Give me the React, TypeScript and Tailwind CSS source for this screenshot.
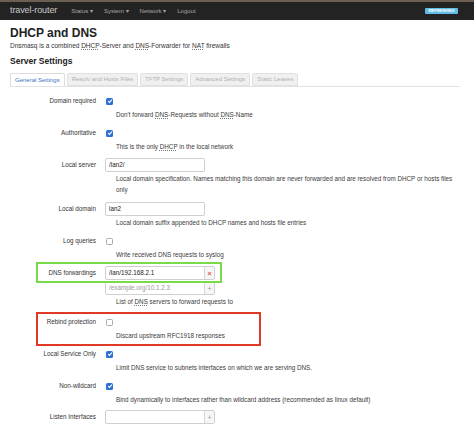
import React from 'react';

const Abbr = ({ children }: { children: React.ReactNode }) => (
  <span className="underline decoration-dotted decoration-[#777] underline-offset-[1px]">{children}</span>
);

const Check = ({ on }: { on?: boolean }) =>
  on ? (
    <span className="w-[7px] h-[7px] rounded-[1.5px] bg-[#2f6fd6] flex items-center justify-center">
      <svg viewBox="0 0 8 8" className="w-[6px] h-[6px]">
        <path d="M1.6 4.3 L3.3 5.9 L6.5 2.1" stroke="white" strokeWidth="1.5" fill="none" />
      </svg>
    </span>
  ) : (
    <span className="w-[7px] h-[7px] rounded-[1.5px] border border-[#a9a9a9] bg-white" />
  );

const TextInput = ({ value }: { value: string }) => (
  <div className="h-[14px] w-[100px] border border-[#cfcfcf] rounded-[2px] px-[3px] flex items-center text-[#222] bg-white">
    {value}
  </div>
);

const ListInput = ({ value, placeholder, btn }: { value?: string; placeholder?: string; btn: 'x' | '+' }) => (
  <div className="h-[14px] w-[110px] flex border border-[#cfcfcf] rounded-[2px] bg-white">
    <div className={`flex-1 px-[3px] flex items-center ${value ? 'text-[#222]' : 'text-[#999]'}`}>
      {value || placeholder}
    </div>
    <div className="w-[10px] border-l border-[#d6d6d6] bg-[#f6f6f6] flex items-center justify-center">
      {btn === 'x' ? (
        <span className="text-[#d9534f] text-[7px] font-bold leading-none">×</span>
      ) : (
        <span className="text-[#999] text-[7px] leading-none">+</span>
      )}
    </div>
  </div>
);

interface RowProps {
  label: string;
  children: React.ReactNode;
  desc?: React.ReactNode;
  className?: string;
}

const Row = ({ label, children, desc, className = 'mb-[6px]' }: RowProps) => (
  <div className={`flex ${className}`}>
    <div className="w-[86px] h-[14px] flex items-center justify-end text-[#333] shrink-0">{label}</div>
    <div className="ml-[9px] flex-1">
      {children}
      {desc && <div className="ml-[11px] mt-[1px] leading-[11px] text-[#3a3a3a]">{desc}</div>}
    </div>
  </div>
);

const CheckLine = ({ on }: { on?: boolean }) => (
  <div className="h-[14px] flex items-center pl-[1px]">
    <Check on={on} />
  </div>
);

export default function App() {
  const tabs = ['General Settings', 'Resolv and Hosts Files', 'TFTP Settings', 'Advanced Settings', 'Static Leases'];

  return (
    <div className="w-[474px] h-[427px] overflow-hidden bg-white font-['Liberation_Sans',Arial,sans-serif] text-[6.3px]">
      {/* Navbar */}
      <div className="h-[20px] bg-[#232323] border-t-2 border-[#6b5f52] flex items-center px-[10px]">
        <span className="text-[9px] text-[#c9c9c9] tracking-[-0.1px]">travel-router</span>
        <div className="ml-[14px] flex items-center gap-[11px] text-[6px] text-[#a8a8a8]">
          <span>Status ▾</span>
          <span>System ▾</span>
          <span>Network ▾</span>
          <span>Logout</span>
        </div>
        <span className="ml-auto mr-[6px] bg-[#62bde6] text-white text-[4px] font-bold px-[2px] h-[6px] w-[33px] flex items-center justify-center rounded-[1px]">
          REFRESHING
        </span>
      </div>

      <div className="px-[10px]">
        <h1 className="mt-[6px] text-[12px] leading-[14px] font-bold text-[#222]">DHCP and DNS</h1>
        <p className="mt-[1px] leading-[10px] text-[#333] text-[6.5px]">
          Dnsmasq is a combined <Abbr>DHCP</Abbr>-Server and <Abbr>DNS</Abbr>-Forwarder for <Abbr>NAT</Abbr> firewalls
        </p>
        <h2 className="mt-[5px] text-[8.5px] leading-[11px] font-bold text-[#222]">Server Settings</h2>

        {/* Tabs */}
        <div className="mt-[6px] flex gap-[2px] border-b border-[#e3e3e3] w-[450px] text-[6px]">
          {tabs.map((t, i) =>
            i === 0 ? (
              <div key={t} className="h-[13px] px-[4px] flex items-center border border-b-0 border-[#ddd] bg-white text-[#3b73c4] rounded-t-[2px] -mb-[1px]">
                {t}
              </div>
            ) : (
              <div key={t} className="h-[13px] px-[4px] flex items-center border border-[#e0e0e0] bg-[#f0f0f0] text-[#b0b0b0] rounded-t-[2px]">
                {t}
              </div>
            )
          )}
        </div>

        <div className="mt-[7px]">
          <Row
            label="Domain required"
            desc={<>Don't forward <Abbr>DNS</Abbr>-Requests without <Abbr>DNS</Abbr>-Name</>}
          >
            <CheckLine on />
          </Row>
          <Row label="Authoritative" desc={<>This is the only <Abbr>DHCP</Abbr> in the local network</>}>
            <CheckLine on />
          </Row>
          <Row
            label="Local server"
            className="mb-[7px]"
            desc={
              <>
                Local domain specification. Names matching this domain are never forwarded and are resolved from DHCP or hosts files
                <br />
                only
              </>
            }
          >
            <TextInput value="/lan2/" />
          </Row>
          <Row label="Local domain" desc="Local domain suffix appended to DHCP names and hosts file entries">
            <TextInput value="lan2" />
          </Row>
          <Row label="Log queries" desc="Write received DNS requests to syslog">
            <CheckLine />
          </Row>

          <div className="relative">
            <div className="absolute left-[26px] top-[-4px] w-[186px] h-[21px] border-2 border-[#78dc4a] pointer-events-none" />
            <Row
              label="DNS forwardings"
              className="mb-[8px]"
              desc={<>List of <Abbr>DNS</Abbr> servers to forward requests to</>}
            >
              <ListInput value="/lan/192.168.2.1" btn="x" />
              <div className="mt-[1px]">
                <ListInput placeholder="/example.org/10.1.2.3" btn="+" />
              </div>
            </Row>
          </div>

          <div className="relative">
            <div className="absolute left-[26px] top-[-3px] w-[225px] h-[34px] border-2 border-[#e03a26] pointer-events-none" />
            <Row label="Rebind protection" desc="Discard upstream RFC1918 responses">
              <CheckLine />
            </Row>
          </div>

          <Row label="Local Service Only" desc="Limit DNS service to subnets interfaces on which we are serving DNS.">
            <CheckLine on />
          </Row>
          <Row
            label="Non-wildcard"
            className="mb-[5px]"
            desc="Bind dynamically to interfaces rather than wildcard address (recommended as linux default)"
          >
            <CheckLine on />
          </Row>
          <Row label="Listen Interfaces">
            <ListInput btn="+" />
          </Row>
        </div>
      </div>
    </div>
  );
}
